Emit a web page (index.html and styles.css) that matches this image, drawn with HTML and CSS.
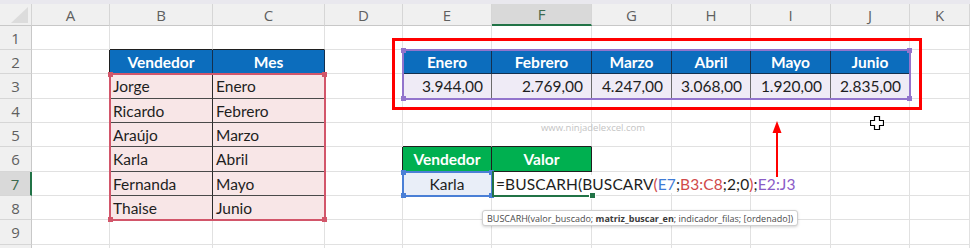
FILE: index.html
```html
<!DOCTYPE html>
<html lang="es">
<head>
<meta charset="utf-8">
<title>BUSCARH</title>
<link rel="stylesheet" href="styles.css">
</head>
<body>
<div class="sheet">
  <div class="topstrip"></div>
  <div class="row hdr">
    <div class="corner"><svg width="18" height="16" viewBox="0 0 18 16"><polygon points="17,0 17,16 0,16" fill="#dcdcdc"/></svg></div>
    <div class="ch">A</div><div class="ch">B</div><div class="ch">C</div><div class="ch">D</div><div class="ch">E</div><div class="ch sel">F</div><div class="ch">G</div><div class="ch">H</div><div class="ch">I</div><div class="ch">J</div><div class="ch">K</div>
  </div>

  <div class="row h24">
    <div class="rh">1</div>
    <div class="c"></div><div class="c db"></div><div class="c db"></div><div class="c"></div><div class="c"></div><div class="c"></div><div class="c"></div><div class="c"></div><div class="c"></div><div class="c"></div><div class="c"></div>
  </div>

  <div class="row h24">
    <div class="rh">2</div>
    <div class="c dr"></div>
    <div class="c blue">Vendedor</div><div class="c blue">Mes</div>
    <div class="c"></div>
    <div class="c blue">Enero</div><div class="c blue">Febrero</div><div class="c blue">Marzo</div><div class="c blue">Abril</div><div class="c blue">Mayo</div><div class="c blue">Junio</div>
    <div class="c"></div>
  </div>

  <div class="row h25">
    <div class="rh">3</div>
    <div class="c"></div>
    <div class="c pink">Jorge</div><div class="c pink">Enero</div>
    <div class="c"></div>
    <div class="c num">3.944,00</div><div class="c num">2.769,00</div><div class="c num">4.247,00</div><div class="c num">3.068,00</div><div class="c num">1.920,00</div><div class="c num last">2.835,00</div>
    <div class="c"></div>
  </div>

  <div class="row h24">
    <div class="rh">4</div>
    <div class="c"></div>
    <div class="c pink">Ricardo</div><div class="c pink">Febrero</div>
    <div class="c"></div><div class="c"></div><div class="c"></div><div class="c"></div><div class="c"></div><div class="c"></div><div class="c"></div><div class="c"></div>
  </div>

  <div class="row h24">
    <div class="rh">5</div>
    <div class="c"></div>
    <div class="c pink">Araújo</div><div class="c pink">Marzo</div>
    <div class="c"></div><div class="c db"></div><div class="c db"></div><div class="c"></div><div class="c"></div><div class="c"></div><div class="c"></div><div class="c"></div>
  </div>

  <div class="row h25">
    <div class="rh">6</div>
    <div class="c"></div>
    <div class="c pink">Karla</div><div class="c pink">Abril</div>
    <div class="c dr"></div>
    <div class="c green">Vendedor</div><div class="c green">Valor</div>
    <div class="c"></div><div class="c"></div><div class="c"></div><div class="c"></div><div class="c"></div>
  </div>

  <div class="row h24">
    <div class="rh sel">7</div>
    <div class="c"></div>
    <div class="c pink">Fernanda</div><div class="c pink">Mayo</div>
    <div class="c"></div>
    <div class="c ref">Karla</div>
    <div class="c edit"><span class="formula"><span>=BUSCARH(BUSCARV</span><span class="fr">(</span><span class="fb">E7</span><span>;</span><span class="fr">B3:C8</span><span>;2;0</span><span class="fr">)</span><span>;</span><span class="fp">E2:J3</span></span></div>
    <div class="c"></div><div class="c"></div><div class="c"></div><div class="c"></div><div class="c"></div>
  </div>

  <div class="row h24">
    <div class="rh">8</div>
    <div class="c"></div>
    <div class="c pink lastrow">Thaise</div><div class="c pink lastrow">Junio</div>
    <div class="c"></div><div class="c"></div><div class="c"></div><div class="c"></div><div class="c"></div><div class="c"></div><div class="c"></div><div class="c"></div>
  </div>

  <div class="row h25">
    <div class="rh">9</div>
    <div class="c"></div><div class="c"></div><div class="c"></div><div class="c"></div><div class="c"></div><div class="c"></div><div class="c"></div><div class="c"></div><div class="c"></div><div class="c"></div><div class="c"></div>
  </div>

  <div class="row h24">
    <div class="rh"></div>
    <div class="c"></div><div class="c"></div><div class="c"></div><div class="c"></div><div class="c"></div><div class="c"></div><div class="c"></div><div class="c"></div><div class="c"></div><div class="c"></div><div class="c"></div>
  </div>

  <!-- overlays -->
  <div class="rng rng-pink"><i class="hd tl"></i><i class="hd tr"></i><i class="hd bl"></i><i class="hd br"></i></div>
  <div class="rng rng-purple"><i class="hd tl"></i><i class="hd tr"></i><i class="hd bl"></i><i class="hd br"></i></div>
  <div class="rng rng-blue"><i class="hd tl"></i><i class="hd tr"></i><i class="hd bl"></i><i class="hd br"></i></div>
  <div class="editmark"></div>
  <div class="redbox"></div>
  <svg class="arrow" width="12" height="56" viewBox="0 0 12 56"><polygon points="6,0 10.5,12 1.5,12" fill="#ff0000"/><rect x="5" y="10" width="2" height="46" fill="#ff0000"/></svg>
  <svg class="cursor" width="14" height="14" viewBox="0 0 14 14"><path d="M4.5 0.5h5v4h4v5h-4v4h-5v-4h-4v-5h4z" fill="#fff" stroke="#000" stroke-width="1.2" stroke-linejoin="miter"/></svg>
  <div class="watermark">www.ninjadelexcel.com</div>
  <div class="tooltip"><span>BUSCARH(valor_buscado; <b>matriz_buscar_en</b>; indicador_filas; [ordenado])</span></div>
</div>
</body>
</html>
```

FILE: styles.css
```css
html, body {
  margin: 0;
  padding: 0;
  background: #ffffff;
}

.sheet {
  position: relative;
  width: 970px;
  height: 248px;
  overflow: hidden;
  font-family: "Lato", "Open Sans", sans-serif;
  font-size: 15.5px;
  color: #1e1e1e;
  background: #ffffff;
}

.topstrip {
  height: 4px;
  background: #e9e8ee;
}

.row {
  display: grid;
  grid-template-columns: 32px 78px 103px 112px 78px 89px 100px 80px 79px 80px 79px 1fr;
}

.hdr { height: 22px; }
.h24 { height: 24px; }
.h25 { height: 25px; }

.corner {
  background: #f0f0f0;
  border-right: 1px solid #d4d4d4;
  border-bottom: 1px solid #c8c8c8;
  display: flex;
  align-items: flex-end;
  justify-content: flex-end;
  padding: 0 2px 2px 0;
  box-sizing: border-box;
}

.ch {
  background: #f0f0f0;
  border-right: 1px solid #d6d6d6;
  border-bottom: 1px solid #c8c8c8;
  box-sizing: border-box;
  display: flex;
  align-items: center;
  justify-content: center;
  font-family: "Open Sans", "Noto Sans", sans-serif;
  font-size: 15px;
  color: #5f5f5f;
}

.ch.sel {
  background: #d9d9d9;
  border-bottom: 2px solid #217346;
  color: #3c6a4e;
}

.rh {
  background: #f0f0f0;
  border-right: 1px solid #c8c8c8;
  border-bottom: 1px solid #d6d6d6;
  box-sizing: border-box;
  display: flex;
  align-items: center;
  justify-content: center;
  font-family: "Open Sans", "Noto Sans", sans-serif;
  font-size: 15px;
  color: #5f5f5f;
}

.rh.sel {
  background: #d9d9d9;
  border-right: 2px solid #217346;
  color: #3c6a4e;
}

.c {
  border-right: 1px solid #e1e1e1;
  border-bottom: 1px solid #e1e1e1;
  box-sizing: border-box;
  display: flex;
  align-items: center;
  padding: 0 3px;
  white-space: nowrap;
  min-width: 0;
}

.db { border-bottom-color: #1f1f1f; }
.dr { border-right-color: #1f1f1f; }

.blue {
  background: #0c6dbd;
  color: #ffffff;
  font-weight: 700;
  justify-content: center;
  border-right-color: #14304f;
  border-bottom-color: #14304f;
}

.pink {
  background: #f8e6e7;
  border-right-color: #2b2b2b;
  border-bottom-color: #4a4a4a;
}

.pink.lastrow { border-bottom-color: #e1e1e1; }

.num {
  background: #efebf6;
  justify-content: flex-end;
  padding-right: 8px;
  border-right-color: #6b6b6b;
  border-bottom-color: #e1e1e1;
}

.num.last { border-right-color: #e1e1e1; }

.green {
  background: #00b050;
  color: #ffffff;
  font-weight: 700;
  justify-content: center;
  border-right-color: #1f1f1f;
  border-bottom-color: #1f1f1f;
}

.ref {
  background: #e9eef8;
  justify-content: center;
}

.edit {
  position: relative;
  overflow: visible;
  padding-left: 4px;
  z-index: 2;
}

.formula {
  background: #ffffff;
  padding-right: 2px;
  letter-spacing: 0.1px;
}

.fr { color: #d04a4a; }
.fb { color: #3f7bd6; }
.fp { color: #8a5cc7; }

/* range highlight borders */
.rng {
  position: absolute;
  box-sizing: border-box;
  z-index: 3;
}

.rng-pink {
  left: 109px;
  top: 73px;
  width: 217px;
  height: 148px;
  border: 2px solid #d2566a;
  --hc: #d2566a;
}

.rng-purple {
  left: 402px;
  top: 49px;
  width: 509px;
  height: 51px;
  border: 2px solid #9274cc;
  --hc: #9274cc;
}

.rng-blue {
  left: 402px;
  top: 171px;
  width: 91px;
  height: 26px;
  border: 2px solid #4a7fd6;
  --hc: #4a7fd6;
}

.hd {
  position: absolute;
  width: 5px;
  height: 5px;
  background: var(--hc);
}

.hd.tl { left: -3px; top: -3px; }
.hd.tr { right: -3px; top: -3px; }
.hd.bl { left: -3px; bottom: -3px; }
.hd.br { right: -3px; bottom: -3px; }

.editmark {
  position: absolute;
  left: 492px;
  top: 171px;
  width: 101px;
  height: 26px;
  box-sizing: border-box;
  border-left: 2px solid #217346;
  border-bottom: 2px solid #217346;
  z-index: 3;
}

.editmark::after {
  content: "";
  position: absolute;
  right: -3px;
  bottom: -4px;
  width: 5px;
  height: 5px;
  background: #217346;
  border: 1px solid #ffffff;
}

.redbox {
  position: absolute;
  left: 392px;
  top: 38px;
  width: 530px;
  height: 72px;
  box-sizing: border-box;
  border: 3px solid #ff0000;
  z-index: 4;
}

.arrow {
  position: absolute;
  left: 771px;
  top: 121px;
  z-index: 4;
}

.cursor {
  position: absolute;
  left: 870px;
  top: 116px;
  z-index: 5;
}

.watermark {
  position: absolute;
  left: 541px;
  top: 121px;
  font-family: "Open Sans", "Noto Sans", sans-serif;
  font-size: 9.5px;
  color: #c4c4c4;
  z-index: 1;
}

.tooltip {
  position: absolute;
  left: 482px;
  top: 210px;
  height: 16px;
  padding: 0 4px;
  box-sizing: border-box;
  display: flex;
  align-items: center;
  background: #ffffff;
  border: 1px solid #cfcfcf;
  border-radius: 3px;
  box-shadow: 0 1px 3px rgba(0, 0, 0, 0.18);
  font-family: "Open Sans", "Noto Sans", sans-serif;
  font-size: 9px;
  color: #4a4a4a;
  white-space: nowrap;
  z-index: 6;
}

.tooltip b {
  font-weight: 700;
  color: #3a3a3a;
}
```
